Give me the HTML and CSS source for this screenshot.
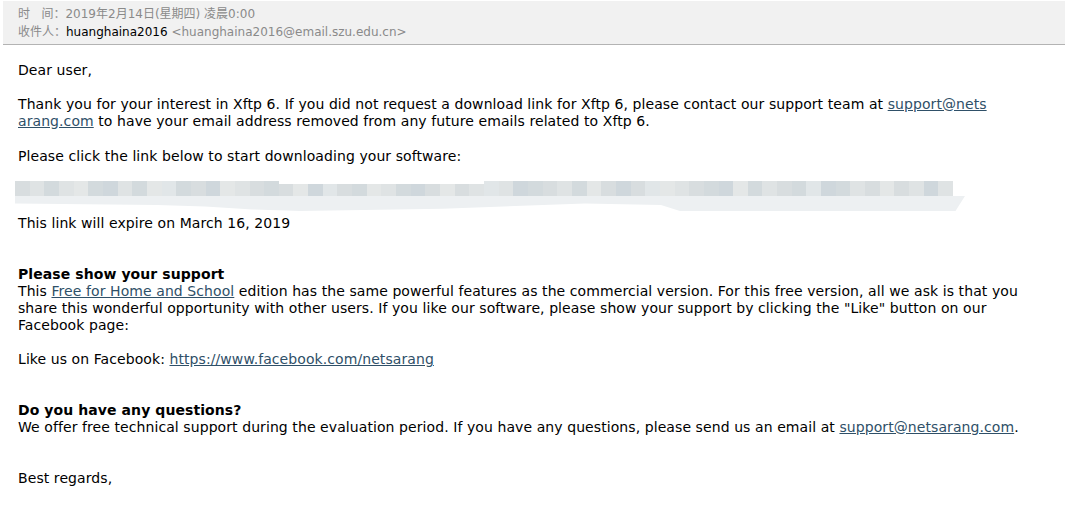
FILE: index.html
```html
<!DOCTYPE html>
<html>
<head>
<meta charset="utf-8">
<link rel="stylesheet" href="styles.css">
</head>
<body>
<div class="mail-head">
  <div class="head-row"><span class="lbl">时&nbsp;&nbsp;&nbsp;间：</span><span class="val">2019年2月14日(星期四) 凌晨0:00</span></div>
  <div class="head-row"><span class="lbl">收件人：</span><span class="name">huanghaina2016</span> <span class="val">&lt;huanghaina2016@email.szu.edu.cn&gt;</span></div>
</div>
<div class="mail-body">
  <p class="gap1">Dear user,</p>
  <p class="gap1b">Thank you for your interest in Xftp 6. If you did not request a download link for Xftp 6, please contact our support team at <a href="#">support@nets<br>arang.com</a> to have your email address removed from any future emails related to Xftp 6.</p>
  <p>Please click the link below to start downloading your software:</p>
  <div class="mosaic">
    <div class="mos-top">
      <i></i><i></i><i></i><i></i><i></i><i></i><i></i><i></i><i></i><i></i><i></i><i></i><i></i><i></i><i></i><i></i>
      <i></i><i></i><i></i><i></i><i></i><i></i><i></i><i></i><i></i><i></i><i></i><i></i><i></i><i></i><i></i><i></i>
      <i></i><i></i><i></i><i></i><i></i><i></i><i></i><i></i><i></i><i></i><i></i><i></i><i></i><i></i><i></i><i></i>
      <i></i><i></i><i></i><i></i><i></i><i></i><i></i><i></i><i></i><i></i><i></i><i></i><i></i><i></i><i></i><i></i>
    </div>
    <div class="mos-bottom"></div>
  </div>
  <p class="gap2">This link will expire on March 16, 2019</p>
  <p class="gap1"><b>Please show your support</b><br>This <a href="#">Free for Home and School</a> edition has the same powerful features as the commercial version. For this free version, all we ask is that you<br>share this wonderful opportunity with other users. If you like our software, please show your support by clicking the "Like" button on our<br>Facebook page:</p>
  <p class="gap2">Like us on Facebook: <a href="#">https://www.facebook.com/netsarang</a></p>
  <p class="gap2"><b>Do you have any questions?</b><br>We offer free technical support during the evaluation period. If you have any questions, please send us an email at <a href="#">support@netsarang.com</a>.</p>
  <p>Best regards,</p>
</div>
</body>
</html>
```
FILE: styles.css
```css
html, body {
  margin: 0;
  padding: 0;
  background: #fff;
}
body {
  font-family: "DejaVu Sans", Verdana, sans-serif;
}
.mail-head {
  margin: 1px 1px 0 3px;
  background: #f1f1f1;
  border-bottom: 1px solid #b3b3b3;
  padding: 4px 15px 3px;
  font-family: "DejaVu Sans", "Noto Sans CJK SC", sans-serif;
  font-size: 12px;
  line-height: 18px;
  color: #8a8a8a;
}
.head-row {
  white-space: nowrap;
}
.head-row .name {
  color: #000;
}
.mail-body {
  padding: 17px 0 0 18px;
  font-size: 14px;
  letter-spacing: 0.08px;
  line-height: 17px;
  color: #000;
}
.mail-body p {
  margin: 0;
  white-space: nowrap;
}
.mail-body .gap1 {
  margin-bottom: 17px;
}
.mail-body .gap1b {
  margin-bottom: 18px;
}
.mail-body .gap2 {
  margin-bottom: 34px;
}
.mail-body a {
  color: #2f5068;
  text-decoration: underline;
}
.mosaic {
  margin: 16px 0 4px -3px;
  width: 938px;
  height: 30px;
}
.mos-top {
  display: flex;
  height: 15px;
}
.mos-top i {
  flex: 1;
  background: #d8dddf;
}
.mos-top i:nth-child(2n) { background: #dfe3e4; }
.mos-top i:nth-child(3n) { background: #d3dadd; }
.mos-top i:nth-child(5n) { background: #e4e7e7; }
.mos-top i:nth-child(7n) { background: #cfd7dc; }
.mos-top i:nth-child(11n) { background: #e1e6e8; }
.mos-top i:nth-child(n+19):nth-child(-n+32) {
  margin-top: 3px;
}
.mos-bottom {
  height: 15px;
  width: 950px;
  background: #edf0f2;
  clip-path: polygon(0 0, 100% 0, 99% 100%, 70% 100%, 68% 60%, 60% 50%, 45% 85%, 30% 100%, 25% 90%, 20% 70%, 15% 60%, 0 50%);
}
```
